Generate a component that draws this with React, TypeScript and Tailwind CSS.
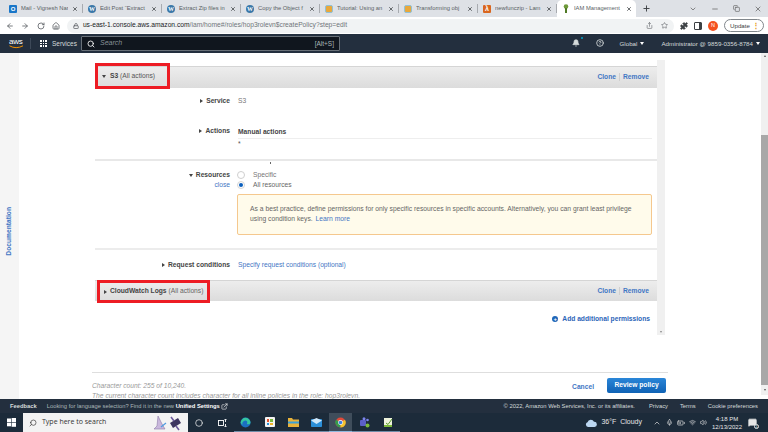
import React from "react";
import { ArrowLeft, ArrowRight, RotateCw, Home, Lock, Share, Star, Puzzle, Search, Bell, CircleHelp, X, Plus, ChevronDown, Minus, Copy, ExternalLink, ChevronUp, Mic, BatteryMedium, Wifi, Volume2, MessageSquare, Circle } from "lucide-react";

const font = { fontFamily: '"Liberation Sans", Arial, sans-serif' };

function Wp() {
  return <span className="w-[8px] h-[8px] shrink-0 rounded-full bg-[#3b78a8] flex items-center justify-center text-white text-[6px] font-bold leading-none" style={{ fontFamily: '"Liberation Serif", serif' }}>W</span>;
}
function TabIcon({ k }: { k: string }) {
  if (k === "mail") return <span className="w-[8px] h-[8px] shrink-0 rounded-[1px] bg-[#1976c8] flex items-center justify-center text-white text-[6px] font-bold leading-none">O</span>;
  if (k === "wp") return <Wp />;
  if (k === "box") return <span className="w-[8px] h-[8px] shrink-0 rounded-[2px] bg-[#e8a83c] border border-[#8fc0d8]" />;
  if (k === "lambda") return <span className="w-[8px] h-[8px] shrink-0 rounded-[1px] bg-[#d9661f] flex items-center justify-center text-white text-[7px] font-bold leading-none">λ</span>;
  return (
    <svg width="8" height="9" viewBox="0 0 8 9" className="shrink-0"><circle cx="4" cy="2.5" r="2.3" fill="#6f9a3a" /><rect x="3" y="4" width="2" height="5" fill="#4f7a24" /></svg>
  );
}
function Tab({ k, t, active }: { k: string; t: string; active?: boolean }) {
  return (
    <div className={"w-[79px] shrink-0 flex items-center pl-[5px] pr-[4px] gap-[4px] " + (active ? "h-[17px] bg-white rounded-t-[5px]" : "h-[9px] border-r border-[#a8abb0]")}>
      <TabIcon k={k} />
      <span className="flex-1 min-w-0 overflow-hidden whitespace-nowrap text-[5.8px] text-[#5a5f65]">{t}</span>
      <X size={6} strokeWidth={3} className="text-[#3c4043] shrink-0" />
    </div>
  );
}

function Caret({ down }: { down?: boolean }) {
  return down
    ? <span className="inline-block shrink-0 w-0 h-0 border-x-[2.5px] border-x-transparent border-t-[3px] border-t-[#444]" />
    : <span className="inline-block shrink-0 w-0 h-0 border-y-[2.5px] border-y-transparent border-l-[3px] border-l-[#444]" />;
}

function Links() {
  return (
    <div className="flex items-center text-[6.7px] font-bold text-[#3f76c4]">
      <span>Clone</span>
      <span className="w-px h-[8px] bg-[#cfcfcf] mx-[3px]" />
      <span>Remove</span>
    </div>
  );
}

function SectionHeader({ small }: { small?: boolean }) {
  return (
    <div className={"flex items-center justify-between bg-gradient-to-b from-[#ededed] to-[#dcdcdc] border-t border-[#d5d5d5] pr-[8px] " + (small ? "h-[21px]" : "h-[22px]")}>
      <span />
      <Links />
    </div>
  );
}

function Label({ children, down, className = "" }: { children: React.ReactNode; down?: boolean; className?: string }) {
  return (
    <div className={"w-[135px] shrink-0 flex items-center justify-end gap-[3px] text-[6.7px] font-bold text-[#444] " + className}>
      <Caret down={down} />
      <span>{children}</span>
    </div>
  );
}

function WinLogo() {
  return (
    <svg width="9" height="9" viewBox="0 0 9 9" fill="#fff"><rect x="0" y="0.5" width="4" height="3.6" /><rect x="4.6" y="0" width="4.4" height="4.1" /><rect x="0" y="4.7" width="4" height="3.6" /><rect x="4.6" y="4.7" width="4.4" height="4.1" /></svg>
  );
}

function Chrome() {
  return (
    <svg width="11" height="11" viewBox="0 0 12 12">
      <circle cx="6" cy="6" r="5.5" fill="#e04a3a" />
      <path d="M6 6 L1.2 8.8 A5.5 5.5 0 0 1 1.2 3 Z" fill="#2f9e4f" />
      <path d="M6 6 L6 11.5 A5.5 5.5 0 0 1 1.2 8.8 Z" fill="#2f9e4f" />
      <path d="M6 6 L10.8 3 A5.5 5.5 0 0 1 6 11.5 Z" fill="#f3c22f" />
      <circle cx="6" cy="6" r="2.6" fill="#fff" />
      <circle cx="6" cy="6" r="2" fill="#3d7fe0" />
    </svg>
  );
}

function TaskApp({ children, active }: { children: React.ReactNode; active?: boolean }) {
  return (
    <div className={"w-[23.7px] h-full flex items-center justify-center border-b " + (active ? "bg-[#3f4d5b] border-[#8fb8de]" : "border-[#6f8ca8]")}>
      {children}
    </div>
  );
}

export default function App() {
  return (
    <div className="w-[768px] h-[432px] flex flex-col overflow-hidden bg-white" style={font}>
      {/* Browser tabs */}
      <div className="h-[17px] shrink-0 bg-[#dee1e6] flex items-center pl-[4px]">
        <Tab k="mail" t="Mail - Vignesh Nar" />
        <Tab k="wp" t="Edit Post “Extract" />
        <Tab k="wp" t="Extract Zip files in" />
        <Tab k="wp" t="Copy the Object f" />
        <Tab k="box" t="Tutorial: Using an" />
        <Tab k="box" t="Transforming obj" />
        <Tab k="lambda" t="newfunczip - Lam" />
        <Tab k="iam" t="IAM Management" active />
        <Plus size={9} strokeWidth={2.5} className="text-[#3c4043] ml-[6px] shrink-0" />
        <div className="flex-1 flex items-center justify-end gap-[14px] pr-[6px] text-[#555]">
          <ChevronDown size={8} />
          <Minus size={8} />
          <Copy size={7} />
          <X size={8} />
        </div>
      </div>
      {/* Browser toolbar */}
      <div className="h-[17px] shrink-0 bg-white flex items-center pl-[6px] pr-[4px] text-[#5f6368]">
        <div className="flex items-center gap-[7.3px]">
          <ArrowLeft size={8} strokeWidth={2.5} />
          <ArrowRight size={8} strokeWidth={2.5} />
          <RotateCw size={8} strokeWidth={2.5} />
          <Home size={8} strokeWidth={2.5} />
        </div>
        <div className="ml-[7px] w-[223px] grow h-[14px] rounded-full bg-[#f1f3f4] flex items-center pl-[6px] pr-[6px]">
          <Lock size={6} strokeWidth={3} className="text-[#5f6368] shrink-0" />
          <span className="ml-[4px] text-[6.7px] whitespace-nowrap text-[#202124]">us-east-1.console.aws.amazon.com<span className="text-[#70757a]">/iam/home#/roles/hop3rolevn$createPolicy?step=edit</span></span>
          <div className="ml-auto flex items-center gap-[8px]">
            <Share size={7} />
            <Star size={7} />
          </div>
        </div>
        <div className="ml-[6px] flex items-center gap-[6px]">
          <Puzzle size={8} fill="#3c4043" className="text-[#3c4043]" />
          <span className="w-[8px] h-[8px] border-[1.5px] border-[#3c4043] rounded-[1px] flex justify-end"><span className="w-[2.5px] bg-[#3c4043]" /></span>
          <span className="w-[10px] h-[10px] rounded-full bg-[#f4511e] text-white text-[5.5px] flex items-center justify-center">N</span>
          <span className="w-[40px] h-[13px] rounded-full border border-[#80868b] flex items-center justify-between pl-[5px] pr-[3px] text-[6.2px] text-[#3c4043]">Update<span className="text-[#e8a020] font-bold text-[8px] leading-none">⋮</span></span>
        </div>
      </div>
      {/* AWS nav */}
      <div className="h-[19px] shrink-0 bg-[#232f3e] flex items-center text-white text-[7px]">
        <div className="w-[31px] pl-[9px] flex flex-col items-start leading-none border-r border-[#3d4958] h-[11px]">
          <span className="text-[8px] leading-[7px] tracking-[-0.2px]">aws</span>
          <svg width="15" height="4" viewBox="0 0 15 4"><path d="M0.5 0.8 Q7 4.5 14 0.8" stroke="#f29100" strokeWidth="1" fill="none" /></svg>
        </div>
        <div className="ml-[9px] grid grid-cols-3 gap-[1px] w-[7px]">
          {Array.from({ length: 9 }).map((_, i) => <span key={i} className="w-[1.6px] h-[1.6px] bg-white" />)}
        </div>
        <span className="ml-[5px] text-[#d5dbdb] text-[6.5px] w-[24px]">Services</span>
        <div className="ml-[5px] w-[259px] h-[15px] bg-[#10161e] border border-[#687078] rounded-[1px] flex items-center px-[5px]">
          <Search size={8} strokeWidth={2.5} className="text-white" />
          <span className="ml-[5px] italic text-[#879196]">Search</span>
          <span className="ml-auto text-[#aab7b8] text-[6.5px]">[Alt+S]</span>
        </div>
        <div className="flex-1 flex items-center justify-end pr-[8px] text-[#d5dbdb] text-[6.2px]">
          <span className="relative">
            <Bell size={8} fill="#d5dbdb" />
            <span className="absolute -top-[2px] -right-[3px] w-[2px] h-[2px] rounded-full bg-[#00a1c9]" />
          </span>
          <CircleHelp size={8} strokeWidth={2.5} className="ml-[16px]" />
          <span className="ml-[16px]">Global</span>
          <span className="ml-[3px]"><span className="block w-0 h-0 border-x-[2.5px] border-x-transparent border-t-[3px] border-t-white" /></span>
          <span className="ml-[17px]">Administrator @ 9859-0356-8784</span>
          <span className="ml-[3px]"><span className="block w-0 h-0 border-x-[2.5px] border-x-transparent border-t-[3px] border-t-white" /></span>
        </div>
      </div>
      {/* Page */}
      <div className="flex-1 min-h-0 flex">
        <div className="w-[19px] shrink-0 bg-[#f5f5f5] flex items-center justify-center">
          <span className="[writing-mode:vertical-rl] rotate-180 text-[6.7px] font-bold text-[#3f76c4] mt-[10px]">Documentation</span>
        </div>
        <div className="flex-1 min-w-0 pl-[73px] pr-[93px] flex flex-col">
          <div className="h-[319px] shrink-0 pl-[3px] pr-[3px] pt-[13px] overflow-hidden">
            <div className="h-[269px] pr-[8px] relative">
              {/* vertical panel scrollbar */}
              <div className="absolute right-0 -top-[6px] w-[8px] h-[275px] bg-[#f0f0f0] flex items-end justify-center">
                <span className="mb-[2px] w-0 h-0 border-x-[1.5px] border-x-transparent border-t-[2px] border-t-[#888]" />
              </div>
              <div className="relative">
                <SectionHeader />
                <div className="absolute -top-[3px] left-0 w-[75px] h-[26px] border-[3px] border-[#ed1c24] flex items-center pl-[4px] gap-[3px] text-[6.7px] text-[#555] whitespace-nowrap">
                  <Caret down />
                  <span className="ml-[1px]"><b className="text-[#444]">S3</b> (All actions)</span>
                </div>
              </div>
              <div className="h-[73px] pt-[6px] border-b-2 border-[#e8e8e8]">
                <div className="flex items-center h-[14px]">
                  <Label>Service</Label>
                  <span className="ml-[8px] text-[6.7px] text-[#777]">S3</span>
                </div>
                <div className="flex mt-[16px]">
                  <Label className="h-[14px]">Actions</Label>
                  <div className="ml-[8px] flex-1 mr-[5px] mt-[1px] text-[6.7px]">
                    <div className="font-bold text-[#444] h-[14px] pt-[2px] border-b border-[#eeeeee]">Manual actions</div>
                    <div className="text-[#555] leading-[10px]">*</div>
                  </div>
                </div>
              </div>
              <div className="h-[89px] pt-[9px] border-b-2 border-[#ececec] relative">
                <span className="absolute left-[175px] top-[1px] w-px h-[2px] bg-[#666]" />
                <div className="flex items-center h-[10px]">
                  <Label down>Resources</Label>
                  <span className="ml-[7px] w-[8px] h-[8px] rounded-full border border-[#cfcfcf] bg-white" />
                  <span className="ml-[8px] text-[6.7px] text-[#777]">Specific</span>
                </div>
                <div className="flex items-center h-[10px]">
                  <div className="w-[135px] text-right text-[6.7px] text-[#3f76c4]">close</div>
                  <span className="ml-[7px] w-[8px] h-[8px] rounded-full border border-[#d5d5d5] bg-white flex items-center justify-center"><span className="w-[4.5px] h-[4.5px] rounded-full bg-[#0b5fbd]" /></span>
                  <span className="ml-[8px] text-[6.7px] text-[#666]">All resources</span>
                </div>
                <div className="ml-[142px] mr-[5px] mt-[4px] h-[41px] rounded-[2px] border border-[#f5c88e] bg-[#fffbeb] pl-[12px] pt-[9px] text-[6.75px] leading-[10px] text-[#666] whitespace-nowrap">
                  <div>As a best practice, define permissions for only specific resources in specific accounts. Alternatively, you can grant least privilege</div>
                  <div>using condition keys. <span className="text-[#3f76c4] ml-[1px]">Learn more</span></div>
                </div>
              </div>
              <div className="h-[30px] flex items-center">
                <Label>Request conditions</Label>
                <span className="ml-[8px] text-[6.7px] text-[#3f76c4]">Specify request conditions (optional)</span>
              </div>
              <div className="relative">
                <SectionHeader small />
                <div className="absolute top-0 left-[2px] w-[113px] h-[23px] border-[3px] border-[#ed1c24] flex items-center pl-[4px] gap-[3px] text-[6.7px] text-[#666] whitespace-nowrap">
                  <Caret />
                  <span><b className="text-[#444]">CloudWatch Logs</b> (All actions)</span>
                </div>
              </div>
              <div className="mt-[13px] pr-[7px] flex justify-end items-center gap-[4px] text-[6.7px] font-bold text-[#2b64b8]">
                <span className="w-[6px] h-[6px] rounded-full bg-[#1f66b8] text-white flex items-center justify-center text-[6px] leading-none">+</span>
                <span>Add additional permissions</span>
              </div>
            </div>
          </div>
          <div className="flex-1 min-h-0 border-t border-[#dedede] flex justify-between overflow-hidden">
            <div className="pt-[8px] italic text-[6.7px] text-[#999] leading-[10px] whitespace-nowrap">
              <div>Character count: 255 of 10,240.</div>
              <div>The current character count includes character for all inline policies in the role: hop3rolevn.</div>
            </div>
            <div className="pt-[5px] flex items-start gap-[13px] pr-[2px] shrink-0">
              <span className="text-[6.7px] font-bold text-[#3f76c4] mt-[4px]">Cancel</span>
              <span className="w-[59px] h-[15px] rounded-[2px] bg-gradient-to-b from-[#2a86d8] to-[#0f62b5] text-white text-[6.7px] font-bold flex items-center justify-center">Review policy</span>
            </div>
          </div>
        </div>
        <div className="w-[7px] shrink-0 bg-[#f0f0f0] flex flex-col items-center">
          <span className="mt-[2px] mb-[78px] w-0 h-0 border-x-[1.5px] border-x-transparent border-b-[2px] border-b-[#555]" />
          <div className="w-full flex-1 bg-[#a8a8a8]" />
          <div className="h-[10px] flex items-center"><span className="w-0 h-0 border-x-[1.5px] border-x-transparent border-t-[2px] border-t-[#555]" /></div>
          <div className="h-[4px] w-full bg-white" />
        </div>
      </div>
      {/* AWS footer */}
      <div className="h-[14px] shrink-0 bg-[#232f3e] flex items-center pl-[10px] pr-[10px] text-[5.8px] text-[#d5dbdb]">
        <span className="font-bold">Feedback</span>
        <span className="ml-[10px] text-[#aab7b8]">Looking for language selection? Find it in the new <b className="text-white">Unified Settings</b></span>
        <ExternalLink size={7} className="ml-[1px] text-white" />
        <span className="ml-auto">© 2022, Amazon Web Services, Inc. or its affiliates.</span>
        <span className="ml-[14px]">Privacy</span>
        <span className="ml-[12px]">Terms</span>
        <span className="ml-[12px]">Cookie preferences</span>
      </div>
      {/* Windows taskbar */}
      <div className="h-[19px] shrink-0 bg-[#1c2b3a] flex items-center text-white">
        <div className="w-[23px] flex justify-center"><WinLogo /></div>
        <div className="w-[165px] h-full bg-[#f3f3f3] flex items-center pl-[6px] text-[#333] relative">
          <Search size={8} className="-scale-x-100" />
          <span className="ml-[5px] text-[7px]" style={{ fontFamily: '"Open Sans", sans-serif' }}>Type here to search</span>
          <svg className="absolute left-[129px] top-[2px]" width="30" height="16" viewBox="0 0 30 16">
            <path d="M6 1 L10 9 L13 14 L2 14 L5 11 Z" fill="#c9b8dc" stroke="#8c7aa8" strokeWidth="0.6" />
            <path d="M9 12 L14 8" stroke="#4d9be0" strokeWidth="1.2" />
            <path d="M18 8 L26 3 L29 8 L21 13 Z" fill="#3d3560" />
            <path d="M19 2 L22 6 M24 11 L27 15" stroke="#6c5a9c" strokeWidth="1.6" />
          </svg>
        </div>
        <div className="w-[22px] flex justify-center"><Circle size={8} strokeWidth={2} /></div>
        <div className="w-[24px] flex justify-center">
          <svg width="9" height="8" viewBox="0 0 9 8" fill="none" stroke="#fff" strokeWidth="0.9"><rect x="0.5" y="1.5" width="5" height="5" /><path d="M7.5 1 V3 M7.5 5 V7 M6.5 0.5 H8.5 M6.5 7.5 H8.5" /></svg>
        </div>
        <div className="flex items-center h-full">
          <TaskApp>
            <svg width="11" height="11" viewBox="0 0 12 12">
              <circle cx="6" cy="6" r="5.5" fill="#1b6fc2" />
              <path d="M0.8 6 A5.3 5.3 0 0 1 11.4 6.5 C11 8 8 8.5 7.5 7 C9 5.5 7 3.5 5 4 C2.5 4.5 2 7 3 8.5 C1.8 8 1 7 0.8 6 Z" fill="#35c6a0" />
            </svg>
          </TaskApp>
          <TaskApp><span className="w-[10px] h-[10px] rounded-[1px] bg-[#f3f3f3] grid grid-cols-2 gap-[1px] p-[2px]"><i className="bg-[#e2532e]" /><i className="bg-[#7cb83b]" /><i className="bg-[#2b8fd8]" /><i className="bg-[#f0b429]" /></span></TaskApp>
          <TaskApp>
            <svg width="11" height="9" viewBox="0 0 11 9"><path d="M0 0 H4 L5 1.5 H11 V9 H0 Z" fill="#e8b23a" /><rect x="0" y="3.5" width="11" height="2" fill="#3aa0d8" /></svg>
          </TaskApp>
          <TaskApp>
            <svg width="11" height="9" viewBox="0 0 11 9"><rect y="1" width="11" height="8" rx="0.8" fill="#2b8fd8" /><path d="M0 2.5 L5.5 6 L11 2.5 L5.5 0 Z" fill="#cfe8fa" /></svg>
          </TaskApp>
          <TaskApp active><Chrome /></TaskApp>
          <TaskApp>
            <svg width="11" height="11" viewBox="0 0 11 11"><rect x="1" y="3" width="6" height="6" rx="1" fill="#5b5fc7" /><circle cx="5" cy="1.8" r="1.5" fill="#7b83eb" /><circle cx="8.5" cy="3" r="1.3" fill="#7b83eb" /><circle cx="8.5" cy="8.5" r="2" fill="#7cb83b" /></svg>
          </TaskApp>
          <TaskApp>
            <svg width="10" height="11" viewBox="0 0 10 11"><rect x="1" y="1" width="8" height="9" fill="#eef3dc" /><rect x="1" y="8" width="8" height="2" fill="#7cb83b" /><path d="M3 6 L5 7.5 L9 2" stroke="#5a9a2a" strokeWidth="1" fill="none" /></svg>
          </TaskApp>
        </div>
        <div className="flex-1 flex items-center justify-end text-[#e6e6e6]">
          <svg width="12" height="8" viewBox="0 0 12 8" fill="#bcd8f2"><path d="M3 8 A2.5 2.5 0 0 1 2.5 3.2 A3.5 3.5 0 0 1 9 2.8 A2.6 2.6 0 0 1 9.5 8 Z" /></svg>
          <span className="ml-[4px] text-[7px] whitespace-nowrap">36°F&nbsp; Cloudy</span>
          <ChevronUp size={8} className="ml-[11px]" />
          <Mic size={7} className="ml-[5px]" />
          <BatteryMedium size={8} className="ml-[4px]" />
          <Wifi size={7} className="ml-[4px]" />
          <Volume2 size={7} className="ml-[4px]" />
          <div className="ml-[5px] text-[6px] leading-[8px] text-center whitespace-nowrap">
            <div>4:18 PM</div>
            <div>12/13/2022</div>
          </div>
          <span className="relative ml-[6px] mr-[11px]">
            <MessageSquare size={9} fill="#e6e6e6" />
            <span className="absolute -bottom-[2px] -right-[2px] w-[5px] h-[5px] rounded-full bg-[#1c2b3a] border border-[#e6e6e6] text-[4px] leading-none flex items-center justify-center">1</span>
          </span>
        </div>
      </div>
    </div>
  );
}
